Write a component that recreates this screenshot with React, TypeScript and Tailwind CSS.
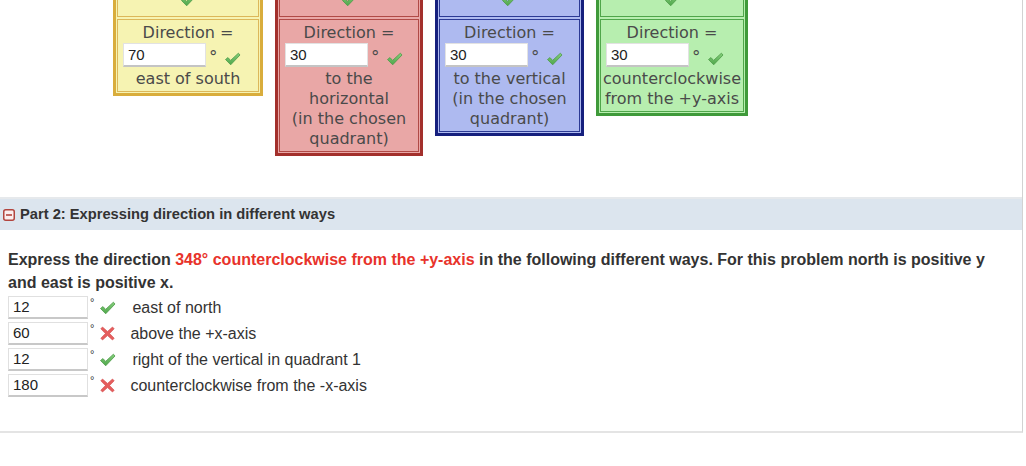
import React from "react";

type Theme = {
  outer: string,
  cell: string,
  width: string
};

type Box = {
  theme: Theme,
  value: string,
  lines: string[]
};

type Answer = {
  value: string,
  ok: boolean,
  label: string
};

const boxes: Box[] = [
  {
    theme: { outer: "border-[#d9ad3c] bg-[#f6f3b2]", cell: "border-[#dcb75a]", width: "w-[150px]" },
    value: "70",
    lines: ["east of south"]
  },
  {
    theme: { outer: "border-[#a3302c] bg-[#e9a7a6]", cell: "border-[#b04a46]", width: "w-[148px]" },
    value: "30",
    lines: ["to the", "horizontal", "(in the chosen", "quadrant)"]
  },
  {
    theme: { outer: "border-[#16207e] bg-[#aebaf0]", cell: "border-[#2c3a94]", width: "w-[149px]" },
    value: "30",
    lines: ["to the vertical", "(in the chosen", "quadrant)"]
  },
  {
    theme: { outer: "border-[#3f9a3a] bg-[#b7eeaf]", cell: "border-[#4fa64a]", width: "w-[152px]" },
    value: "30",
    lines: ["counterclockwise", "from the +y-axis"]
  }
];

const answers: Answer[] = [
  { value: "12", ok: true, label: "east of north" },
  { value: "60", ok: false, label: "above the +x-axis" },
  { value: "12", ok: true, label: "right of the vertical in quadrant 1" },
  { value: "180", ok: false, label: "counterclockwise from the -x-axis" }
];

function Check({ className }: { className?: string }) {
  return (
    <svg width="17" height="14" viewBox="0 0 17 14" className={className}>
      <defs>
        <linearGradient id="chk" x1="0" y1="0" x2="0" y2="1">
          <stop offset="0" stopColor="#86cf7c" />
          <stop offset="1" stopColor="#4ea64a" />
        </linearGradient>
      </defs>
      <path
        d="M1.5 7.5 L4 5.6 L6.6 8.4 L14.4 1.2 L16 3 L6.7 12.8 Z"
        fill="url(#chk)"
        stroke="#4b9a46"
        strokeWidth="0.8"
        strokeLinejoin="round"
      />
    </svg>
  );
}

function Cross() {
  return (
    <svg width="15" height="15" viewBox="0 0 15 15">
      <path
        d="M2.5 1 L7.5 5.4 L12.5 1 L14.2 2.8 L9.6 7.5 L14.2 12.2 L12.5 14 L7.5 9.6 L2.5 14 L0.8 12.2 L5.4 7.5 L0.8 2.8 Z"
        fill="#e55d5d"
        stroke="#d24a4a"
        strokeWidth="0.6"
        strokeLinejoin="round"
      />
    </svg>
  );
}

function DirectionBox({ box }: { box: Box }) {
  return (
    <div className={`${box.theme.width} ${box.theme.outer} border-[3px] p-[1px] flex flex-col gap-[2px]`}>
      <div className={`${box.theme.cell} border h-[26px] flex justify-center items-start pt-[1px]`}>
        <Check />
      </div>
      <div className={`${box.theme.cell} border pt-[3px] pb-[2px] text-center leading-[20px]`}>
        <div>Direction =</div>
        <div className="flex items-start pl-[5px] h-[26px]">
          <div className="w-[83px] h-[24px] bg-white border border-[#e2e2e2] border-b-[#c4c4c4] border-b-2 text-left pl-[4px] text-[15px] leading-[22px] text-[#222] font-['Liberation_Sans',Arial,sans-serif]">
            {box.value}
          </div>
          <span className="ml-[3px] mt-[5px] text-[17px] leading-[18px]">°</span>
          <Check className="ml-[6px] mt-[9px]" />
        </div>
        {box.lines.map((line) => (
          <div key={line}>{line}</div>
        ))}
      </div>
    </div>
  );
}

function App() {
  return (
    <div className="w-[1023px] bg-white border-r border-b-2 border-r-[#d2d2d2] border-b-[#e4e4e4] pb-[34px] overflow-hidden">
      <div className="flex items-start gap-[12px] pl-[113px] -mt-[13px] font-['DejaVu_Sans',Verdana,sans-serif] text-[16px] text-[#4a4a4a]">
        {boxes.map((box) => (
          <DirectionBox key={box.theme.outer} box={box} />
        ))}
      </div>

      <div className="mt-[41px] font-['Liberation_Sans',Arial,sans-serif] text-[#333]">
        <div className="h-[33px] bg-[#dce5ee] border-t-2 border-[#e6e9ec] flex items-center pl-[3px] gap-[5px]">
          <svg width="12" height="12" viewBox="0 0 12 12">
            <rect x="0.75" y="0.75" width="10.5" height="10.5" rx="2" fill="#fbeeee" stroke="#b2453e" strokeWidth="1.5" />
            <rect x="3" y="5.2" width="6" height="1.6" fill="#b2453e" />
          </svg>
          <span className="font-bold text-[14.7px]">Part 2: Expressing direction in different ways</span>
        </div>

        <div className="pt-[18px] pl-[8px] pr-[30px] font-bold text-[16px] leading-[23px]">
          Express the direction <span className="text-[#e8332b]">348° counterclockwise from the +y-axis</span> in the following different ways. For this problem north is positive y and east is positive x.
        </div>

        <div className="pl-[8px] pt-[2px] flex flex-col gap-[3px]">
          {answers.map((a) => (
            <div key={a.label} className="flex items-center h-[23px] text-[16px]">
              <div className="w-[80px] h-[23px] bg-white border border-[#e0e0e0] border-b-2 border-b-[#c8c8c8] pl-[4px] leading-[20px] text-[15px] text-[#222]">
                {a.value}
              </div>
              <span className="self-start ml-[2px] text-[11px] leading-[12px]">°</span>
              <div className="w-[18px] ml-[4px] flex justify-center">
                {a.ok ? <Check /> : <Cross />}
              </div>
              <span className={a.ok ? "ml-[16px]" : "ml-[14px]"}>{a.label}</span>
            </div>
          ))}
        </div>
      </div>
    </div>
  );
}

export default App;
